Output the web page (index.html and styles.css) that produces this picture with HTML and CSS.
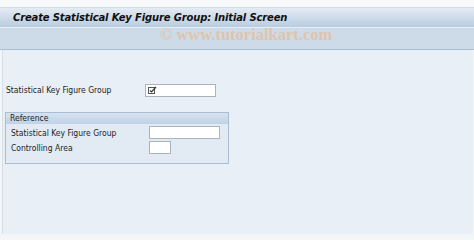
FILE: index.html
```html
<!DOCTYPE html>
<html>
<head>
<meta charset="utf-8">
<link rel="stylesheet" href="styles.css">
</head>
<body>
<div class="screen">
  <div class="top-strip"></div>
  <div class="title-bar"><span class="title">Create Statistical Key Figure Group: Initial Screen</span></div>
  <div class="toolbar"><span class="watermark">© www.tutorialkart.com</span></div>
  <div class="content">
    <div class="row main-row">
      <span class="label">Statistical Key Figure Group</span>
      <span class="input wide">
        <svg class="check" width="9" height="8" viewBox="0 0 9 8"><rect x="0.5" y="1.5" width="6" height="6" fill="none" stroke="#555" stroke-width="1"/><path d="M2 4.5 L3.5 6 L8 1" fill="none" stroke="#333" stroke-width="1.2"/></svg>
      </span>
    </div>
    <div class="group">
      <div class="group-head">Reference</div>
      <div class="group-body">
        <div class="row">
          <span class="label">Statistical Key Figure Group</span>
          <span class="input wide"></span>
        </div>
        <div class="row">
          <span class="label">Controlling Area</span>
          <span class="input short"></span>
        </div>
      </div>
    </div>
  </div>
  <div class="bottom-strip"></div>
</div>
</body>
</html>
```
FILE: styles.css
```css
html, body {
  margin: 0;
  padding: 0;
}
body {
  width: 474px;
  height: 240px;
  overflow: hidden;
  background: #f3f6f9;
  font-family: "DejaVu Sans", Tahoma, sans-serif;
}
.screen {
  display: flex;
  flex-direction: column;
  height: 240px;
}
.top-strip {
  height: 7px;
  background: #f7f9fb;
}
.title-bar {
  height: 19px;
  border-top: 1px solid #d2dbe4;
  background: linear-gradient(#e4ebf3, #b9cce0);
  display: flex;
  align-items: center;
  padding-left: 13px;
}
.title {
  font-weight: bold;
  font-style: italic;
  font-size: 10px;
  color: #111;
  letter-spacing: -0.15px;
}
.toolbar {
  height: 21px;
  background: #cddbe8;
  border-top: 1px solid #e6edf4;
  border-bottom: 1px solid #aebfd0;
  position: relative;
}
.watermark {
  position: absolute;
  left: 160px;
  top: -3px;
  font-family: "Liberation Serif", serif;
  font-weight: bold;
  font-size: 16.5px;
  color: rgba(236, 180, 130, 0.6);
}
.content {
  flex: 1;
  margin-left: 2px;
  margin-right: 1px;
  border-left: 1px solid #d6dee7;
  background: #e9eff6;
  padding: 33px 0 0 3px;
}
.row {
  display: flex;
  align-items: center;
  height: 14px;
}
.label {
  font-family: "DejaVu Sans Condensed", "DejaVu Sans", sans-serif;
  font-size: 8.5px;
  color: #222;
  width: 139px;
}
.input {
  display: flex;
  align-items: center;
  height: 11px;
  background: #fff;
  border: 1px solid #a9b4bf;
  box-sizing: content-box;
}
.input.wide { width: 69px; }
.input.short { width: 20px; }
.check {
  margin-left: 2px;
}
.group {
  margin-top: 15px;
  margin-left: -1px;
  width: 222px;
  border: 1px solid #a8bdd3;
  background: #e2ebf4;
}
.group-head {
  height: 11px;
  background: linear-gradient(#d6e3f0, #bfd2e6);
  font-family: "DejaVu Sans Condensed", "DejaVu Sans", sans-serif;
  font-size: 8.5px;
  color: #222;
  padding-left: 4px;
  line-height: 11px;
}
.group-body {
  padding: 1px 0 8px 5px;
}
.group-body .row {
  height: 15px;
}
.group-body .label {
  width: 138px;
}
.bottom-strip {
  height: 6px;
  background: #f3f6f9;
}
```
